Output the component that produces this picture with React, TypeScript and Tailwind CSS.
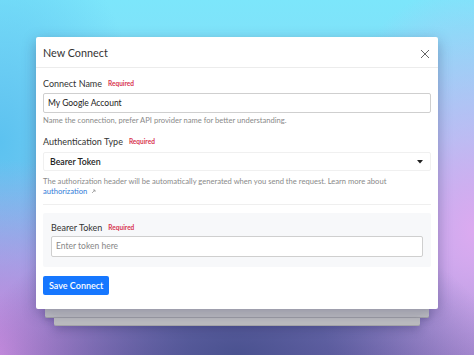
import React from 'react';

function Required() {
  return <span className="ml-[6px] translate-y-[1px] text-[6.5px] font-bold text-[#d8344f] leading-none">Required</span>;
}

function Label({ children }: { children: React.ReactNode }) {
  return (
    <div className="flex items-center h-[12px] text-[9px] text-[#333] leading-none">
      {children}
      <Required />
    </div>
  );
}

export default function App() {
  return (
    <div
      className="w-[474px] h-[355px] overflow-hidden pt-[37px] pl-[36px] bg-[radial-gradient(ellipse_55%_40%_at_50%_100%,#4a5290_0%,rgba(74,82,144,0)_100%),radial-gradient(ellipse_40%_55%_at_0%_100%,#cc8ee2_0%,rgba(204,142,226,0)_100%),radial-gradient(ellipse_35%_70%_at_100%_65%,#dcaaf0_0%,rgba(220,170,240,0)_100%),radial-gradient(ellipse_30%_60%_at_0%_40%,#5cc2f0_0%,rgba(92,194,240,0)_100%),linear-gradient(180deg,#7ce6fb_0%,#88d8f7_40%,#9aa4e4_72%,#7a6cb6_100%)]"
      style={{ fontFamily: 'Lato, "Open Sans", sans-serif' }}
    >
      <div className="w-[402px]">
        <div className="relative z-10 bg-white rounded-[2px] shadow-[0_4px_14px_rgba(40,40,90,0.35)]">
          <div className="h-[31px] flex items-center justify-between px-[7px] pt-[3px] border-b border-[#ececec]">
            <span className="text-[10.8px] text-[#333] leading-none">New Connect</span>
            <svg width="10" height="10" viewBox="0 0 10 10" className="mr-[1px]">
              <path d="M1 1L9 9M9 1L1 9" stroke="#666" strokeWidth="1" />
            </svg>
          </div>
          <div className="px-[7px] pt-[9px] pb-[14px]">
            <Label>Connect Name</Label>
            <div className="mt-[4px] h-[20px] flex items-center px-[4px] border border-[#cfcfcf] rounded-[2px] text-[8.5px] text-[#222]">
              My Google Account
            </div>
            <div className="mt-[3px] h-[10px] flex items-center text-[7.6px] text-[#8a8a8a] leading-none">
              Name the connection, prefer API provider name for better understanding.
            </div>
            <div className="mt-[9px]">
              <Label>Authentication Type</Label>
            </div>
            <div className="mt-[5px] h-[19px] flex items-center justify-between pl-[6px] pr-[7px] border border-[#f0f0f0] rounded-[2px] text-[8.8px] font-semibold text-[#222]">
              <span>Bearer Token</span>
              <svg width="6" height="4" viewBox="0 0 6 4">
                <path d="M0 0H6L3 3.5Z" fill="#222" />
              </svg>
            </div>
            <div className="mt-[5px] text-[7.6px] leading-[10px] text-[#8a8a8a]">
              The authorization header will be automatically generated when you send the request. Learn more about
              <div className="flex items-center gap-[4px]">
                <span className="text-[#2f7bd8]">authorization</span>
                <svg width="5" height="5" viewBox="0 0 5 5">
                  <path d="M1 4L4 1M2 1H4V3" stroke="#999" strokeWidth="0.8" fill="none" />
                </svg>
              </div>
            </div>
            <div className="mt-[8px] border-t border-[#efefef]" />
            <div className="mt-[8px] bg-[#f7f8fa] rounded-[2px] px-[8px] pt-[8px] pb-[10px]">
              <Label>Bearer Token</Label>
              <div className="mt-[3px] h-[21px] flex items-center px-[4px] bg-white border border-[#cfcfcf] rounded-[2px] text-[8.5px] text-[#888]">
                Enter token here
              </div>
            </div>
            <button className="mt-[9px] h-[19px] px-[6px] bg-[#1677ff] rounded-[2px] text-[9px] font-semibold text-white leading-none">
              Save Connect
            </button>
          </div>
        </div>
        <div className="mx-[9px] h-[9px] bg-[#c6c6c8] border-b border-[#a9a9ad] rounded-b-[2px] shadow-[0_2px_6px_rgba(40,40,90,0.3)]" />
        <div className="mx-[18px] h-[8px] bg-[#bdbdc0] border-b border-[#a6a6aa] rounded-b-[2px] shadow-[0_3px_10px_rgba(40,40,90,0.35)]" />
      </div>
    </div>
  );
}
